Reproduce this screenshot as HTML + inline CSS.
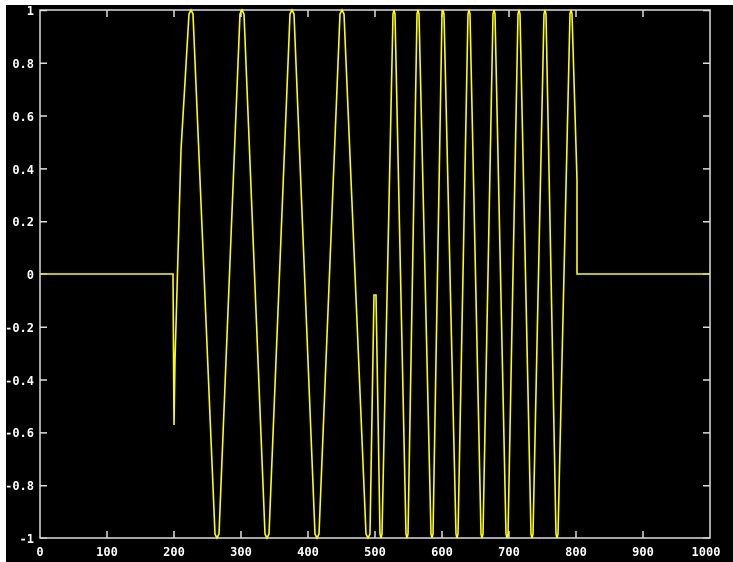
<!DOCTYPE html>
<html><head><style>
html,body{margin:0;padding:0;background:#fff}
svg{display:block}
text{font-family:"DejaVu Sans Mono","Liberation Mono",monospace;font-size:12px;fill:#fff;font-weight:bold}
</style></head><body>
<svg width="733" height="562" viewBox="0 0 733 562">
<rect x="6" y="5" width="727" height="557" fill="#000"/>
<g stroke="#ddd" stroke-width="1.5" fill="none">
<rect x="40" y="10" width="670" height="528"/>
<path d="M40 10.5h7M40 63.3h7M40 116h7M40 168.9h7M40 221.7h7M40 274h7M40 327.3h7M40 380h7M40 432.9h7M40 485.7h7M40 538h7
M710 10.5h-7M710 63.3h-7M710 116h-7M710 168.9h-7M710 221.7h-7M710 274h-7M710 327.3h-7M710 380h-7M710 432.9h-7M710 485.7h-7M710 538h-7
M107 538v-7M174 538v-7M241 538v-7M308 538v-7M375 538v-7M442 538v-7M509 538v-7M576 538v-7M643 538v-7
M107 10v7M174 10v7M241 10v7M308 10v7M375 10v7M442 10v7M509 10v7M576 10v7M643 10v7"/>
</g>
<g text-anchor="end">
<text x="34" y="15">1</text>
<text x="34" y="68">0.8</text>
<text x="34" y="121">0.6</text>
<text x="34" y="174">0.4</text>
<text x="34" y="226">0.2</text>
<text x="34" y="279">0</text>
<text x="34" y="332">-0.2</text>
<text x="34" y="385">-0.4</text>
<text x="34" y="437">-0.6</text>
<text x="34" y="490">-0.8</text>
<text x="34" y="543">-1</text>
</g>
<g text-anchor="middle">
<text x="40" y="556">0</text>
<text x="107" y="556">100</text>
<text x="174" y="556">200</text>
<text x="241" y="556">300</text>
<text x="308" y="556">400</text>
<text x="375" y="556">500</text>
<text x="442" y="556">600</text>
<text x="509" y="556">700</text>
<text x="576" y="556">800</text>
<text x="643" y="556">900</text>
<text x="706" y="556">1000</text>
</g>
<polyline fill="none" stroke="#ffff00" stroke-width="1.6" points="
41,274 173,274 174,425 175,360 181,150 189,14 191,10 193,14 215,534 217,538 219,534
240,14 242,10 244,14 265,534 267,538 269,534 290,14 292,10 294,14 315,534 317,538 319,534
340,14 342,10 344,14 366,534 368,538 370,534 374,295 376,295 380,534 381,538 382,534
393,14 394,10 395,14 406,534 407,538 408,534 417,14 418,10 419,14 431,534 432,538 433,534
442,14 443,10 444,14 456,534 457,538 458,534 468,14 469,10 470,14 481,534 482,538 483,534
493,14 494,10 495,14 506,534 507,538 508,534 518,14 519,10 520,14 531,534 532,538 533,534
544,14 545,10 546,14 556,534 557,538 558,534 570,14 571,10 572,14 577,180 577,274 710,274"/>
</svg>
</body></html>
